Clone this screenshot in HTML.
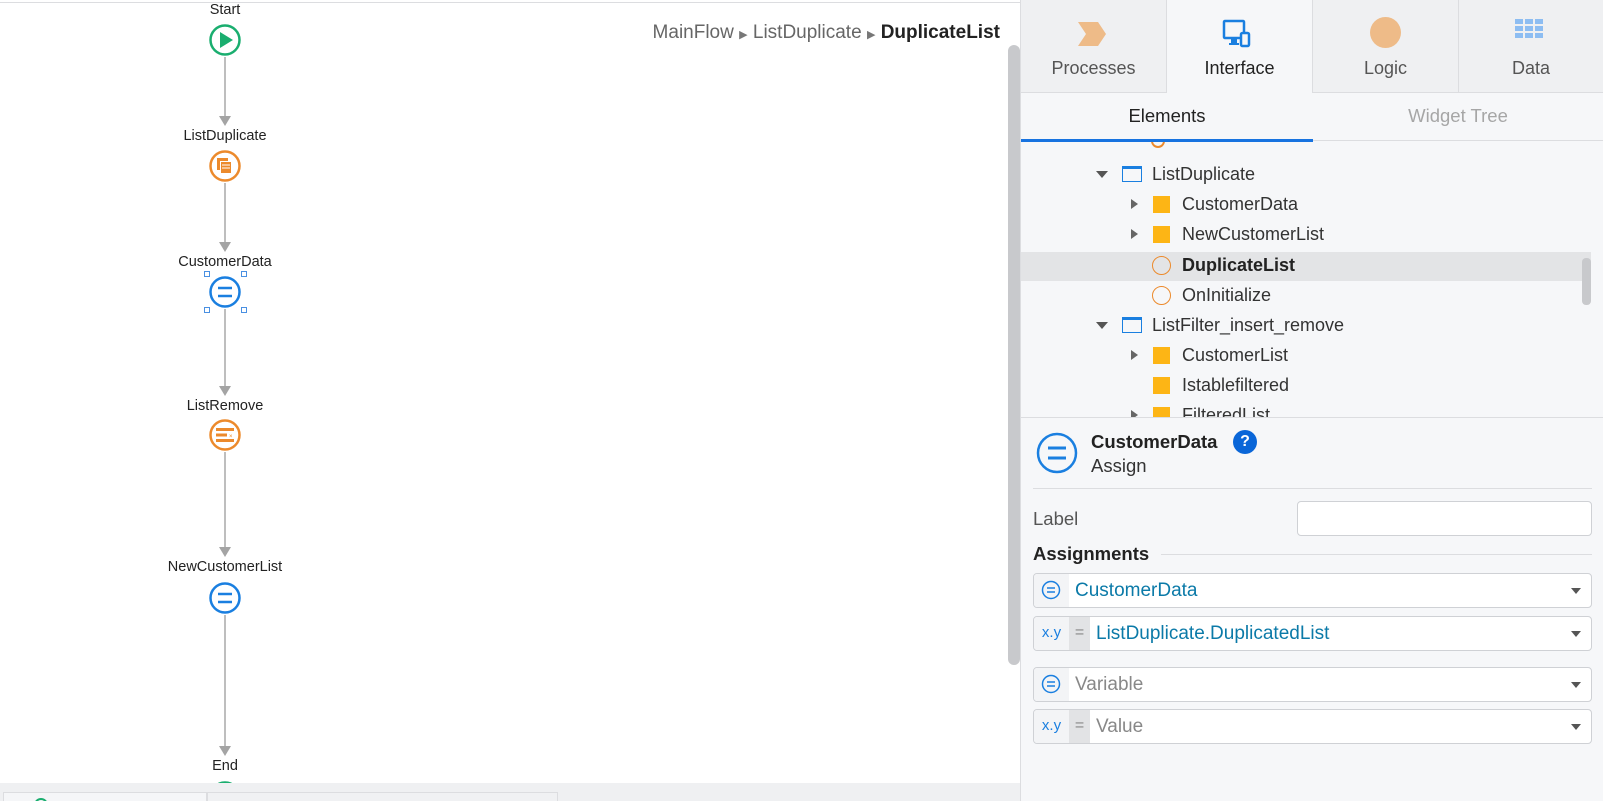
<!DOCTYPE html>
<html style="overflow:hidden;width:1603px;height:801px"><head><meta charset="utf-8">
<style>
*{margin:0;padding:0;box-sizing:border-box}
body{width:1603px;height:801px;overflow:hidden;background:#fff;font-family:"Liberation Sans",sans-serif;color:#2b2b2b;position:relative}
.a{position:absolute}
.lbl{position:absolute;font-size:14.5px;color:#222;transform:translate(-50%,-50%);white-space:nowrap}
.tab{position:absolute;top:0;height:93px;border-right:1px solid #dcdde0;border-bottom:1px solid #dcdde0;background:#eff0f2;text-align:center}
.tab span{position:absolute;left:0;right:0;top:58px;font-size:18px;color:#555}
.tr{position:absolute;font-size:18px;color:#333;white-space:nowrap;line-height:20px}
.sq{position:absolute;width:17px;height:17px;background:#fdb515}
.ar{position:absolute;width:0;height:0;border-top:5px solid transparent;border-bottom:5px solid transparent;border-left:7px solid #666}
.ad{position:absolute;width:0;height:0;border-left:6px solid transparent;border-right:6px solid transparent;border-top:7px solid #555}
.row{position:absolute;left:1033px;width:559px;height:35px;background:#fff;border:1px solid #cfd1d5;border-radius:4px;overflow:hidden}
.row .t{position:absolute;top:6px;font-size:19px;color:#0b7aa8;white-space:nowrap}
.row .ph{color:#888}
.row .dd{position:absolute;right:10px;top:14px;border-left:5px solid transparent;border-right:5px solid transparent;border-top:6px solid #555}
.ic{position:absolute;left:0;top:0;width:35px;height:33px;background:#f3f4f6}
.xy{position:absolute;left:0;top:0;width:35px;height:33px;background:#f3f4f6;color:#1a7fe0;font-size:15px;text-align:center;line-height:31px}
.eq{position:absolute;left:35px;top:0;width:21px;height:33px;background:#e2e3e5;color:#888;font-size:16px;text-align:center;line-height:31px}
</style></head><body>
<div class="a" style="left:0;top:2px;width:1603px;height:1px;background:#dcdde0"></div>

<svg class="a" style="left:0;top:0" width="1008" height="801">
<g stroke="#a9a9a9" stroke-width="1.5" fill="none">
<line x1="225" y1="57" x2="225" y2="118"/>
<line x1="225" y1="183" x2="225" y2="244"/>
<line x1="225" y1="309" x2="225" y2="388"/>
<line x1="225" y1="452" x2="225" y2="549"/>
<line x1="225" y1="615" x2="225" y2="748"/>
</g>
<g fill="#a4a4a4">
<polygon points="219,116 231,116 225,126"/>
<polygon points="219,242 231,242 225,252"/>
<polygon points="219,386 231,386 225,396"/>
<polygon points="219,547 231,547 225,557"/>
<polygon points="219,746 231,746 225,756"/>
</g>
<circle cx="225" cy="40" r="14.5" fill="#fff" stroke="#1aae6f" stroke-width="2.5"/>
<polygon points="220,32 220,48 233,40" fill="#1aae6f"/>
<circle cx="225" cy="166" r="14.5" fill="#fff" stroke="#ec8a2c" stroke-width="2.5"/>
<rect x="217" y="158" width="11" height="12" fill="#ec8a2c"/>
<rect x="220" y="161" width="12" height="13" fill="#fff"/>
<rect x="221" y="162" width="10" height="11" fill="#ec8a2c"/>
<g stroke="#fff" stroke-width="1"><line x1="222" y1="165" x2="230" y2="165"/><line x1="222" y1="168" x2="230" y2="168"/></g>
<circle cx="225" cy="292" r="14.5" fill="#fff" stroke="#1a7fe0" stroke-width="2.5"/>
<g stroke="#1a7fe0" stroke-width="2.5"><line x1="218" y1="288" x2="232" y2="288"/><line x1="218" y1="296" x2="232" y2="296"/></g>
<g fill="#fff" stroke="#4a90e2" stroke-width="1"><rect x="204.5" y="271.5" width="5" height="5"/><rect x="241.5" y="271.5" width="5" height="5"/><rect x="204.5" y="307.5" width="5" height="5"/><rect x="241.5" y="307.5" width="5" height="5"/></g>
<circle cx="225" cy="435" r="14.5" fill="#fff" stroke="#ec8a2c" stroke-width="2.5"/>
<g fill="#ec8a2c"><rect x="216" y="428" width="18" height="3"/><rect x="216" y="433.5" width="11" height="3"/><rect x="216" y="439" width="18" height="3"/></g>
<text x="229" y="438" font-size="6" fill="#ec8a2c" font-family="Liberation Sans">×</text>
<circle cx="225" cy="598" r="14.5" fill="#fff" stroke="#1a7fe0" stroke-width="2.5"/>
<g stroke="#1a7fe0" stroke-width="2.5"><line x1="218" y1="594" x2="232" y2="594"/><line x1="218" y1="602" x2="232" y2="602"/></g>
<circle cx="225" cy="797" r="14.5" fill="#fff" stroke="#1aae6f" stroke-width="2.5"/>
</svg>
<div class="lbl" style="left:225px;top:10px">Start</div>
<div class="lbl" style="left:225px;top:136px">ListDuplicate</div>
<div class="lbl" style="left:225px;top:262px">CustomerData</div>
<div class="lbl" style="left:225px;top:406px">ListRemove</div>
<div class="lbl" style="left:225px;top:567px">NewCustomerList</div>
<div class="lbl" style="left:225px;top:766px">End</div>

<div class="a" style="right:603px;top:22px;font-size:19px;color:#666;white-space:nowrap">MainFlow <span style="font-size:11px;color:#777">▶</span> ListDuplicate <span style="font-size:11px;color:#777">▶</span> <b style="color:#222">DuplicateList</b></div>

<div class="a" style="left:0;top:783px;width:1020px;height:18px;background:#eff0f2"></div>
<div class="a" style="left:3px;top:792px;width:204px;height:9px;background:#f5f6f8;border:1px solid #dcdde0;border-bottom:none;overflow:hidden"><div class="a" style="left:30px;top:5px;width:14px;height:14px;border-radius:50%;border:2px solid #1aae6f"></div></div>
<div class="a" style="left:207px;top:792px;width:351px;height:9px;background:#f0f1f3;border:1px solid #dcdde0;border-bottom:none"></div>

<div class="a" style="left:1008px;top:45px;width:12px;height:620px;background:#c8c9cc;border-radius:6px"></div>

<div class="a" style="left:1020px;top:0;width:583px;height:801px;background:#f6f7f9;border-left:1px solid #dcdde0"></div>
<div class="tab" style="left:1021px;width:146px"><svg class="a" style="left:55px;top:20px" width="32" height="28"><polygon points="2,2 22,2 30,14 22,26 2,26 10,14" fill="#eebb88"/></svg><span>Processes</span></div>
<div class="tab" style="left:1167px;width:146px;background:#f6f7f9;border-bottom:none"><svg class="a" style="left:54px;top:19px" width="40" height="30"><rect x="3" y="2" width="20" height="17" rx="1" fill="none" stroke="#1a7fe0" stroke-width="2.5"/><rect x="10" y="19" width="6" height="6" fill="#1a7fe0"/><rect x="8" y="24" width="10" height="2" fill="#1a7fe0"/><rect x="20" y="14" width="8" height="13" rx="1.5" fill="#f6f7f9" stroke="#1a7fe0" stroke-width="2.5"/></svg><span style="color:#222">Interface</span></div>
<div class="tab" style="left:1313px;width:146px"><div class="a" style="left:57px;top:17px;width:31px;height:31px;border-radius:50%;background:#eebb88"></div><span>Logic</span></div>
<div class="tab" style="left:1459px;width:144px;border-right:none"><svg class="a" style="left:56px;top:19px" width="32" height="26"><g fill="#8dbdf2"><rect x="0" y="0" width="8" height="5"/><rect x="10" y="0" width="8" height="5"/><rect x="20" y="0" width="8" height="5"/><rect x="0" y="7" width="8" height="5"/><rect x="10" y="7" width="8" height="5"/><rect x="20" y="7" width="8" height="5"/><rect x="0" y="14" width="8" height="5"/><rect x="10" y="14" width="8" height="5"/><rect x="20" y="14" width="8" height="5"/></g></svg><span>Data</span></div>

<div class="a" style="left:1021px;top:93px;width:582px;height:48px;border-bottom:1px solid #dcdde0"></div>
<div class="a" style="left:1021px;top:105px;width:292px;text-align:center;font-size:18.5px;color:#222">Elements</div>
<div class="a" style="left:1313px;top:105px;width:290px;text-align:center;font-size:18.5px;color:#a6a6a6">Widget Tree</div>
<div class="a" style="left:1021px;top:139px;width:292px;height:3px;background:#1773e0"></div>

<div class="a" style="left:1021px;top:142px;width:582px;height:275px;overflow:hidden">
<div class="a" style="left:130px;top:-8px;width:14px;height:14px;border-radius:50%;border:2px solid #ec8a2c"></div>
<div class="a" style="left:0;top:110px;width:570px;height:29px;background:#e3e4e6"></div>
</div>
<div class="ad" style="left:1096px;top:171px"></div>
<div class="a" style="left:1122px;top:166px;width:20px;height:16px;border:1.5px solid #1a7fe0;border-top-width:3px"></div>
<div class="tr" style="left:1152px;top:164px">ListDuplicate</div>
<div class="ar" style="left:1131px;top:199px"></div><div class="sq" style="left:1153px;top:196px"></div><div class="tr" style="left:1182px;top:194px">CustomerData</div>
<div class="ar" style="left:1131px;top:229px"></div><div class="sq" style="left:1153px;top:226px"></div><div class="tr" style="left:1182px;top:224px">NewCustomerList</div>
<div class="a" style="left:1152px;top:256px;width:19px;height:19px;border-radius:50%;border:1.5px solid #ec8a2c"></div><div class="tr" style="left:1182px;top:255px;font-weight:bold;color:#222">DuplicateList</div>
<div class="a" style="left:1152px;top:286px;width:19px;height:19px;border-radius:50%;border:1.5px solid #ec8a2c"></div><div class="tr" style="left:1182px;top:285px">OnInitialize</div>
<div class="ad" style="left:1096px;top:322px"></div>
<div class="a" style="left:1122px;top:317px;width:20px;height:16px;border:1.5px solid #1a7fe0;border-top-width:3px"></div>
<div class="tr" style="left:1152px;top:315px">ListFilter_insert_remove</div>
<div class="ar" style="left:1131px;top:350px"></div><div class="sq" style="left:1153px;top:347px"></div><div class="tr" style="left:1182px;top:345px">CustomerList</div>
<div class="sq" style="left:1153px;top:377px"></div><div class="tr" style="left:1182px;top:375px">Istablefiltered</div>
<div class="a" style="left:1021px;top:405px;width:570px;height:12px;overflow:hidden"><div class="ar" style="left:110px;top:5px"></div><div class="sq" style="left:132px;top:2px"></div><div class="tr" style="left:161px;top:0">FilteredList</div></div>
<div class="a" style="left:1582px;top:258px;width:9px;height:47px;background:#c8c9cc;border-radius:4px"></div>
<div class="a" style="left:1021px;top:417px;width:582px;height:1px;background:#dcdde0"></div>

<svg class="a" style="left:1036px;top:432px" width="42" height="42"><circle cx="21" cy="21" r="19" fill="none" stroke="#1a7fe0" stroke-width="2.5"/><g stroke="#1a7fe0" stroke-width="3"><line x1="12" y1="16" x2="30" y2="16"/><line x1="12" y1="26" x2="30" y2="26"/></g></svg>
<div class="a" style="left:1091px;top:431px;font-size:18.5px;font-weight:bold;color:#222">CustomerData</div>
<div class="a" style="left:1233px;top:430px;width:24px;height:24px;border-radius:50%;background:#0a66d8;color:#fff;font-weight:bold;font-size:16px;text-align:center;line-height:24px">?</div>
<div class="a" style="left:1091px;top:455px;font-size:18.5px;color:#333">Assign</div>
<div class="a" style="left:1033px;top:488px;width:559px;height:1px;background:#dcdde0"></div>
<div class="a" style="left:1033px;top:508px;font-size:18.5px;color:#555">Label</div>
<div class="a" style="left:1297px;top:501px;width:295px;height:35px;background:#fff;border:1px solid #cfd1d5;border-radius:4px"></div>
<div class="a" style="left:1033px;top:543px;font-size:18.5px;font-weight:bold;color:#222">Assignments</div>
<div class="a" style="left:1161px;top:554px;width:431px;height:1px;background:#dcdde0"></div>

<div class="row" style="top:573px"><div class="ic"><svg width="35" height="33"><circle cx="17" cy="16" r="8.5" fill="none" stroke="#1a7fe0" stroke-width="1.5"/><g stroke="#1a7fe0" stroke-width="1.5"><line x1="13" y1="14" x2="21" y2="14"/><line x1="13" y1="18" x2="21" y2="18"/></g></svg></div><div class="t" style="left:41px">CustomerData</div><div class="dd"></div></div>
<div class="row" style="top:616px"><div class="xy">x.y</div><div class="eq">=</div><div class="t" style="left:62px">ListDuplicate.DuplicatedList</div><div class="dd"></div></div>
<div class="row" style="top:667px"><div class="ic"><svg width="35" height="33"><circle cx="17" cy="16" r="8.5" fill="none" stroke="#1a7fe0" stroke-width="1.5"/><g stroke="#1a7fe0" stroke-width="1.5"><line x1="13" y1="14" x2="21" y2="14"/><line x1="13" y1="18" x2="21" y2="18"/></g></svg></div><div class="t ph" style="left:41px">Variable</div><div class="dd"></div></div>
<div class="row" style="top:709px"><div class="xy">x.y</div><div class="eq">=</div><div class="t ph" style="left:62px">Value</div><div class="dd"></div></div>
</body></html>
